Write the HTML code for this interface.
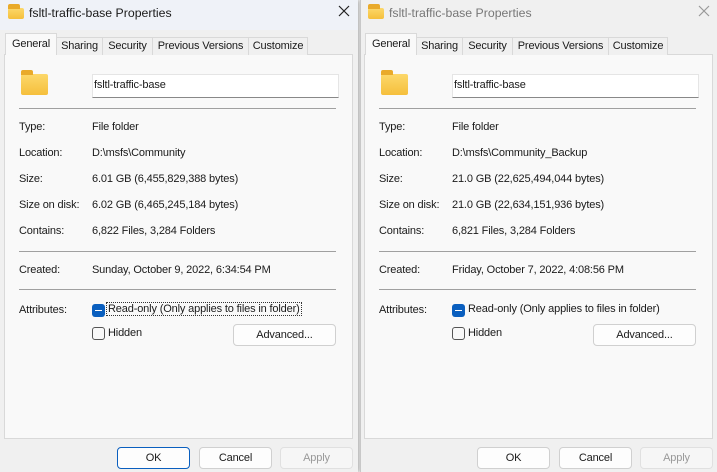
<!DOCTYPE html><html><head><style>
body{margin:0;width:717px;height:472px;overflow:hidden;background:#f0f0f0;font-family:"Liberation Sans",sans-serif;font-size:11px;letter-spacing:-0.15px;color:#1a1a1a;position:relative}
.w{position:absolute;top:0;height:472px;background:#f0f0f0;overflow:hidden}
.a{position:absolute;white-space:nowrap}
.tb{position:absolute;left:0;top:0;right:0;height:30px}
.tab{position:absolute;top:37px;height:17px;border:1px solid #d9d9d9;border-bottom:none;background:#f0f0f0;line-height:17px;text-align:center;white-space:nowrap}
.panel{position:absolute;left:4px;top:54px;width:347px;height:383px;border:1px solid #d9d9d9;background:#f9f9f9}
.sep{position:absolute;left:19px;width:317px;height:1px;background:#a0a0a0}
.btn{position:absolute;height:20px;border:1px solid #d0d0d0;border-radius:4px;background:#fdfdfd;text-align:center;line-height:20px}
.fold{position:absolute;width:27px;height:21px;background:linear-gradient(#fcd86a,#f5bf3c);border-radius:2px}
.fold:before{content:"";position:absolute;left:0;top:-4px;width:12px;height:5px;background:#e9aa2a;border-radius:2px 2px 0 0}
.ttl{position:absolute;top:6px;font-size:12.3px;letter-spacing:0;white-space:nowrap}
</style></head><body>

<div class="w" style="left:0;width:358px;box-shadow:2px 0 4px rgba(0,0,0,.25)">
 <div class="tb" style="background:#eff2f8"></div>
 <div class="fold" style="left:8px;top:8px;width:16px;height:11px"></div>
 <div class="ttl" style="left:29px">fsltl-traffic-base Properties</div>
 <svg class="a" style="left:338px;top:5px" width="12" height="12"><path d="M1 1L11 11M11 1L1 11" stroke="#222" stroke-width="1.2"/></svg>
 <div class="panel"></div>
 <div class="tab" style="left:5px;top:33px;width:50px;height:21px;background:#f9f9f9;line-height:21px;z-index:2">General</div>
 <div class="tab" style="left:56px;width:45px">Sharing</div>
 <div class="tab" style="left:102px;width:49px">Security</div>
 <div class="tab" style="left:152px;width:95px">Previous Versions</div>
 <div class="tab" style="left:248px;width:58px">Customize</div>
 <div class="fold" style="left:21px;top:74px"></div>
 <div class="a" style="left:92px;top:74px;width:244px;height:22px;background:#fff;border:1px solid #e5e5e5;border-bottom-color:#888;line-height:20px;padding-left:1px">fsltl-traffic-base</div>
 <div class="sep" style="top:108px"></div>
 <div class="a" style="left:19px;top:121px">Type:</div><div class="a" style="left:92px;top:121px">File folder</div>
 <div class="a" style="left:19px;top:147px">Location:</div><div class="a" style="left:92px;top:147px">D:\msfs\Community</div>
 <div class="a" style="left:19px;top:173px">Size:</div><div class="a" style="left:92px;top:173px">6.01 GB (6,455,829,388 bytes)</div>
 <div class="a" style="left:19px;top:199px">Size on disk:</div><div class="a" style="left:92px;top:199px">6.02 GB (6,465,245,184 bytes)</div>
 <div class="a" style="left:19px;top:225px">Contains:</div><div class="a" style="left:92px;top:225px">6,822 Files, 3,284 Folders</div>
 <div class="sep" style="top:251px"></div>
 <div class="a" style="left:19px;top:264px">Created:</div><div class="a" style="left:92px;top:264px">Sunday, October 9, 2022, 6:34:54 PM</div>
 <div class="sep" style="top:289px"></div>
 <div class="a" style="left:19px;top:304px">Attributes:</div>
 <div class="a" style="left:92px;top:304px;width:13px;height:13px;background:#0a5fbf;border-radius:3px"><div style="position:absolute;left:3px;top:6px;width:7px;height:1px;background:#fff"></div></div>
 <div class="a" style="left:107px;top:303px;outline:1px dotted #333;padding:0 1px">Read-only (Only applies to files in folder)</div>
 <div class="a" style="left:92px;top:327px;width:11px;height:11px;border:1px solid #555;border-radius:3px"></div>
 <div class="a" style="left:108px;top:327px">Hidden</div>
 <div class="btn" style="left:233px;top:324px;width:101px">Advanced...</div>
 <div class="btn" style="left:117px;top:447px;width:71px;border-color:#0a5fbf">OK</div>
 <div class="btn" style="left:199px;top:447px;width:71px">Cancel</div>
 <div class="btn" style="left:280px;top:447px;width:71px;color:#999;background:#f6f6f6;border-color:#e0e0e0">Apply</div>
</div>

<div class="w" style="left:360px;width:357px;border-left:1px solid #c8c8c8">
 <div class="tb" style="background:#f0f0f0"></div>
 <div class="fold" style="left:7px;top:8px;width:16px;height:11px"></div>
 <div class="ttl" style="left:28px;color:#777">fsltl-traffic-base Properties</div>
 <svg class="a" style="left:337px;top:5px" width="12" height="12"><path d="M1 1L11 11M11 1L1 11" stroke="#999" stroke-width="1.2"/></svg>
 <div class="panel" style="left:3px"></div>
 <div class="tab" style="left:4px;top:33px;width:50px;height:21px;background:#f9f9f9;line-height:21px;z-index:2">General</div>
 <div class="tab" style="left:55px;width:45px">Sharing</div>
 <div class="tab" style="left:101px;width:49px">Security</div>
 <div class="tab" style="left:151px;width:95px">Previous Versions</div>
 <div class="tab" style="left:247px;width:58px">Customize</div>
 <div class="fold" style="left:20px;top:74px"></div>
 <div class="a" style="left:91px;top:74px;width:244px;height:22px;background:#fff;border:1px solid #e5e5e5;border-bottom-color:#888;line-height:20px;padding-left:1px">fsltl-traffic-base</div>
 <div class="sep" style="top:108px;left:18px"></div>
 <div class="a" style="left:18px;top:121px">Type:</div><div class="a" style="left:91px;top:121px">File folder</div>
 <div class="a" style="left:18px;top:147px">Location:</div><div class="a" style="left:91px;top:147px">D:\msfs\Community_Backup</div>
 <div class="a" style="left:18px;top:173px">Size:</div><div class="a" style="left:91px;top:173px">21.0 GB (22,625,494,044 bytes)</div>
 <div class="a" style="left:18px;top:199px">Size on disk:</div><div class="a" style="left:91px;top:199px">21.0 GB (22,634,151,936 bytes)</div>
 <div class="a" style="left:18px;top:225px">Contains:</div><div class="a" style="left:91px;top:225px">6,821 Files, 3,284 Folders</div>
 <div class="sep" style="top:251px;left:18px"></div>
 <div class="a" style="left:18px;top:264px">Created:</div><div class="a" style="left:91px;top:264px">Friday, October 7, 2022, 4:08:56 PM</div>
 <div class="sep" style="top:289px;left:18px"></div>
 <div class="a" style="left:18px;top:304px">Attributes:</div>
 <div class="a" style="left:91px;top:304px;width:13px;height:13px;background:#0a5fbf;border-radius:3px"><div style="position:absolute;left:3px;top:6px;width:7px;height:1px;background:#fff"></div></div>
 <div class="a" style="left:107px;top:303px">Read-only (Only applies to files in folder)</div>
 <div class="a" style="left:91px;top:327px;width:11px;height:11px;border:1px solid #555;border-radius:3px"></div>
 <div class="a" style="left:107px;top:327px">Hidden</div>
 <div class="btn" style="left:232px;top:324px;width:101px">Advanced...</div>
 <div class="btn" style="left:116px;top:447px;width:71px">OK</div>
 <div class="btn" style="left:198px;top:447px;width:71px">Cancel</div>
 <div class="btn" style="left:279px;top:447px;width:71px;color:#999;background:#f6f6f6;border-color:#e0e0e0">Apply</div>
</div>
</body></html>
